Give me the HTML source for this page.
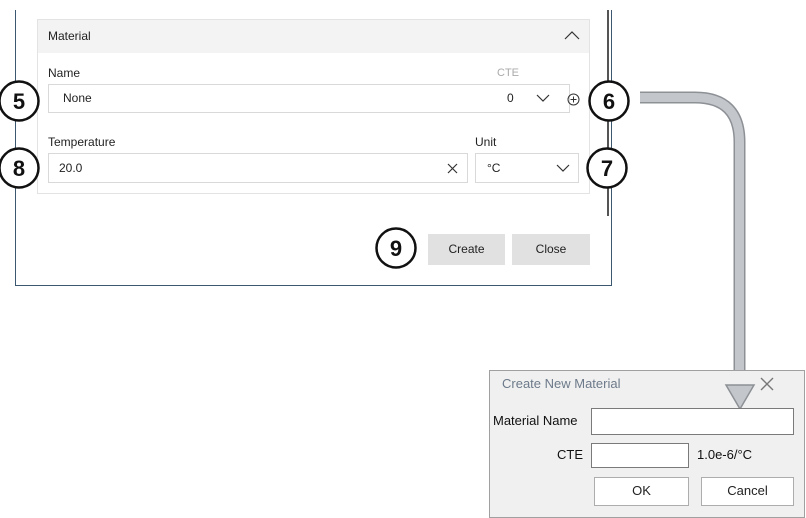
<!DOCTYPE html>
<html><head><style>
body{margin:0;width:806px;height:518px;background:#fff;position:relative;overflow:hidden;font-family:"Liberation Sans",sans-serif;font-size:12px;color:#222}
.a{position:absolute}
.box{position:absolute;background:#fff;border:1px solid #d9d9d9;box-sizing:border-box}
.btn{position:absolute;background:#e1e1e1;text-align:center;line-height:30px;box-sizing:border-box}
.wb{position:absolute;background:#fff;border:1px solid #adadad;box-sizing:border-box;text-align:center;line-height:26px;font-size:13px}
</style></head><body>
<div class="a" style="left:15px;top:10px;width:597px;height:276px;border-left:1px solid #3c5870;border-right:1px solid #3c5870;border-bottom:1px solid #3c5870;box-sizing:border-box"></div>
<div class="a" style="left:607px;top:10px;width:2px;height:206px;background:#555"></div>
<div class="a" style="left:37px;top:19px;width:553px;height:175px;border:1px solid #e3e3e3;box-sizing:border-box;background:#fff"></div>
<div class="a" style="left:38px;top:20px;width:551px;height:33px;background:#f3f3f3"></div>
<div class="a" style="left:48px;top:29px">Material</div>
<svg class="a" style="left:564px;top:31px" width="16" height="10"><path d="M1 8 L8 1 L15 8" fill="none" stroke="#333" stroke-width="1.2"/></svg>
<div class="a" style="left:48px;top:66px">Name</div>
<div class="a" style="left:497px;top:67px;color:#aaa;font-size:11px">CTE</div>
<div class="box" style="left:48px;top:84px;width:522px;height:29px"></div>
<div class="a" style="left:507px;top:91px">0</div>
<div class="a" style="left:63px;top:91px">None</div>
<svg class="a" style="left:536px;top:94px" width="14" height="9"><path d="M1 1 L7 7 L13 1" fill="none" stroke="#333" stroke-width="1.2"/></svg>
<svg class="a" style="left:567px;top:93px" width="13" height="13"><circle cx="6.5" cy="6.5" r="5.5" fill="none" stroke="#333"/><path d="M6.5 3.5V9.5M3.5 6.5H9.5" stroke="#333"/></svg>
<div class="a" style="left:48px;top:135px">Temperature</div>
<div class="a" style="left:475px;top:135px">Unit</div>
<div class="box" style="left:48px;top:153px;width:420px;height:30px"></div>
<div class="a" style="left:59px;top:161px">20.0</div>
<svg class="a" style="left:447px;top:163px" width="11" height="11"><path d="M1 1L10 10M10 1L1 10" stroke="#333" stroke-width="1.2"/></svg>
<div class="box" style="left:475px;top:153px;width:104px;height:30px"></div>
<div class="a" style="left:487px;top:161px">°C</div>
<svg class="a" style="left:556px;top:164px" width="14" height="9"><path d="M1 1 L7 7 L13 1" fill="none" stroke="#333" stroke-width="1.2"/></svg>
<div class="btn" style="left:428px;top:234px;width:77px;height:31px">Create</div>
<div class="btn" style="left:512px;top:234px;width:78px;height:31px">Close</div>
<svg class="a" style="left:0;top:0" width="806" height="518">
<g fill="#fff" stroke="#111" stroke-width="2.5">
<circle cx="19" cy="101" r="19.5"/><circle cx="609" cy="101" r="19.5"/>
<circle cx="19" cy="168" r="19.5"/><circle cx="607" cy="168" r="19.5"/>
<circle cx="396" cy="248" r="19.5"/></g>
<g font-family="Liberation Sans,Arial,sans-serif" font-weight="bold" font-size="22" text-anchor="middle" fill="#111">
<text x="19" y="109">5</text><text x="609" y="109">6</text>
<text x="19" y="176">8</text><text x="607" y="176">7</text>
<text x="396" y="256">9</text></g>
<path d="M640 97.5 H695 Q739.5 97.5 739.5 142 V388" fill="none" stroke="#8d9196" stroke-width="12"/>
<path d="M640 97.5 H695 Q739.5 97.5 739.5 142 V390" fill="none" stroke="#c3c7cb" stroke-width="9"/>
</svg>
<div class="a" style="left:489px;top:370px;width:316px;height:148px;background:#f0f0f0;border:1px solid #a0a0a0;box-sizing:border-box"></div>
<div class="a" style="left:502px;top:376px;color:#6d7a8a;font-size:13px">Create New Material</div>
<svg class="a" style="left:760px;top:377px" width="14" height="14"><path d="M1 1L13 13M13 1L1 13" stroke="#777" stroke-width="1.4"/></svg>
<svg class="a" style="left:0;top:0" width="806" height="518"><path d="M726 385 L754 385 L740 409 Z" fill="#c3c7cb" stroke="#8d9196" stroke-width="1.5"/></svg>
<div class="a" style="left:493px;top:413px;font-size:13px;color:#111">Material Name</div>
<div class="box" style="left:591px;top:408px;width:203px;height:27px;border-color:#7a7a7a"></div>
<div class="a" style="left:557px;top:447px;font-size:13px;color:#111">CTE</div>
<div class="box" style="left:591px;top:443px;width:98px;height:25px;border-color:#7a7a7a"></div>
<div class="a" style="left:697px;top:447px;font-size:13px;color:#111">1.0e-6/°C</div>
<div class="wb" style="left:594px;top:477px;width:95px;height:29px">OK</div>
<div class="wb" style="left:701px;top:477px;width:93px;height:29px">Cancel</div>
</body></html>
